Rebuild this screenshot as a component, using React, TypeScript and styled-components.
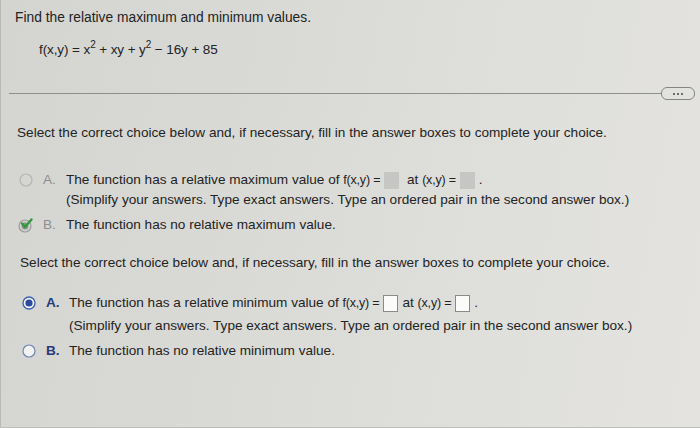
import React from 'react';
import styled, { createGlobalStyle } from 'styled-components';

const GlobalStyle = createGlobalStyle`
  html, body {
    margin: 0;
    padding: 0;
  }
  body {
    font-family: "Liberation Sans", Arial, sans-serif;
    color: #232323;
  }
`;

const Page = styled.div`
  width: 700px;
  height: 428px;
  box-sizing: border-box;
  overflow: hidden;
  background: linear-gradient(100deg, #d4d5d1 0%, #d9dad6 35%, #dfdfdb 70%, #e4e3df 100%);
  border-left: 1px solid #b9b9b6;
  border-bottom: 1px solid #bdbdba;
  padding: 9px 0 0 0;
`;

const Header = styled.div`
  padding-left: 14px;
`;

const Title = styled.div`
  font-size: 13.8px;
  line-height: 18px;
`;

const Formula = styled.div`
  margin-top: 14px;
  padding-left: 24px;
  font-size: 13.5px;
  line-height: 18px;
  letter-spacing: -0.1px;

  sup {
    font-size: 10px;
    vertical-align: 6px;
    line-height: 0;
  }
`;

const DividerRow = styled.div`
  display: flex;
  align-items: center;
  margin-top: 28px;
  padding-left: 8px;
`;

const Line = styled.div`
  flex: 1;
  height: 1px;
  background: #8e8f8c;
`;

const MoreButton = styled.div`
  display: flex;
  align-items: center;
  justify-content: center;
  gap: 2px;
  width: 32px;
  height: 11px;
  border: 1px solid #858683;
  border-radius: 6px;
  background: #e2e2df;
  margin-right: 5px;
`;

const Dot = styled.span`
  width: 2px;
  height: 2px;
  border-radius: 50%;
  background: #444;
`;

const Section = styled.div<{ $indent: number }>`
  padding-left: ${p => p.$indent}px;
`;

const Prompt = styled.div<{ $top: number }>`
  margin-top: ${p => p.$top}px;
  font-size: 13.6px;
  line-height: 18px;
`;

const ChoiceList = styled.div<{ $top: number; $gap: number }>`
  margin-top: ${p => p.$top}px;
  display: flex;
  flex-direction: column;
  gap: ${p => p.$gap}px;
`;

const Choice = styled.div`
  display: flex;
  align-items: flex-start;
`;

const RadioSlot = styled.div`
  width: 18px;
  height: 18px;
  display: flex;
  align-items: center;
  justify-content: center;
`;

const Letter = styled.div<{ $done: boolean }>`
  width: 23px;
  padding-left: 8px;
  font-size: 13.6px;
  line-height: 18px;
  font-weight: ${p => (p.$done ? 'normal' : 'bold')};
  color: ${p => (p.$done ? '#8d8f92' : '#283a78')};
`;

const Body = styled.div<{ $lineGap: number }>`
  font-size: 13.6px;
  line-height: 18px;
  display: flex;
  flex-direction: column;
  gap: ${p => p.$lineGap}px;
`;

const Row = styled.div`
  display: flex;
  align-items: center;
  white-space: nowrap;
`;

const Math = styled.span`
  font-size: 12.5px;
  letter-spacing: -0.2px;
`;

const AnswerBox = styled.span<{ $done: boolean }>`
  display: inline-block;
  box-sizing: border-box;
  width: 15px;
  height: 17px;
  margin: 0 4px;
  background: ${p => (p.$done ? '#c6c7c4' : '#fbfbfa')};
  border: 1px solid ${p => (p.$done ? '#c6c7c4' : '#8a8b89')};
`;

const Radio = ({ state }: { state: 'empty' | 'selected' | 'checked' | 'faded' }) => {
  if (state === 'selected') {
    return (
      <svg width="14" height="14" viewBox="0 0 14 14">
        <circle cx="7" cy="7" r="6" fill="#f4f4f4" stroke="#3b5fb0" strokeWidth="1.3" />
        <circle cx="7" cy="7" r="3.6" fill="#2a4aa0" />
      </svg>
    );
  }
  if (state === 'checked') {
    return (
      <svg width="16" height="16" viewBox="0 0 16 16">
        <circle cx="7" cy="9" r="6" fill="#d0d0ce" stroke="#9c9d9b" strokeWidth="1.2" />
        <circle cx="7" cy="9" r="3.4" fill="#8f908e" />
        <path d="M4 6.5 L7 10 L13.5 2.5" fill="none" stroke="#2f9a3c" strokeWidth="2.4" strokeLinecap="round" strokeLinejoin="round" />
      </svg>
    );
  }
  const faded = state === 'faded';
  return (
    <svg width="14" height="14" viewBox="0 0 14 14">
      <circle cx="7" cy="7" r="6" fill={faded ? 'none' : '#f2f2f1'} stroke={faded ? '#b4b5b3' : '#6f83b8'} strokeWidth="1.2" />
    </svg>
  );
};

const SIMPLIFY = '(Simplify your answers. Type exact answers. Type an ordered pair in the second answer box.)';

export default function App() {
  return (
    <Page>
      <GlobalStyle />
      <Header>
        <Title>Find the relative maximum and minimum values.</Title>
        <Formula>
          f(x,y) = x<sup>2</sup> + xy + y<sup>2</sup> − 16y + 85
        </Formula>
      </Header>

      <DividerRow>
        <Line />
        <MoreButton>
          <Dot />
          <Dot />
          <Dot />
        </MoreButton>
      </DividerRow>

      <Section $indent={16}>
        <Prompt $top={24}>
          Select the correct choice below and, if necessary, fill in the answer boxes to complete your choice.
        </Prompt>
        <ChoiceList $top={29} $gap={7}>
          <Choice>
            <RadioSlot>
              <Radio state="faded" />
            </RadioSlot>
            <Letter $done>A.</Letter>
            <Body $lineGap={2}>
              <Row>
                The function has a relative maximum value of&nbsp;<Math>f(x,y) =</Math>
                <AnswerBox $done />
                &nbsp;at&nbsp;<Math>(x,y) =</Math>
                <AnswerBox $done />.
              </Row>
              <Row>{SIMPLIFY}</Row>
            </Body>
          </Choice>
          <Choice>
            <RadioSlot>
              <Radio state="checked" />
            </RadioSlot>
            <Letter $done>B.</Letter>
            <Body $lineGap={0}>
              <Row>The function has no relative maximum value.</Row>
            </Body>
          </Choice>
        </ChoiceList>
      </Section>

      <Section $indent={19}>
        <Prompt $top={20}>
          Select the correct choice below and, if necessary, fill in the answer boxes to complete your choice.
        </Prompt>
        <ChoiceList $top={22} $gap={7}>
          <Choice>
            <RadioSlot>
              <Radio state="selected" />
            </RadioSlot>
            <Letter $done={false}>A.</Letter>
            <Body $lineGap={5}>
              <Row>
                The function has a relative minimum value of&nbsp;<Math>f(x,y) =</Math>
                <AnswerBox $done={false} />
                at&nbsp;<Math>(x,y) =</Math>
                <AnswerBox $done={false} />.
              </Row>
              <Row>{SIMPLIFY}</Row>
            </Body>
          </Choice>
          <Choice>
            <RadioSlot>
              <Radio state="empty" />
            </RadioSlot>
            <Letter $done={false}>B.</Letter>
            <Body $lineGap={0}>
              <Row>The function has no relative minimum value.</Row>
            </Body>
          </Choice>
        </ChoiceList>
      </Section>
    </Page>
  );
}
